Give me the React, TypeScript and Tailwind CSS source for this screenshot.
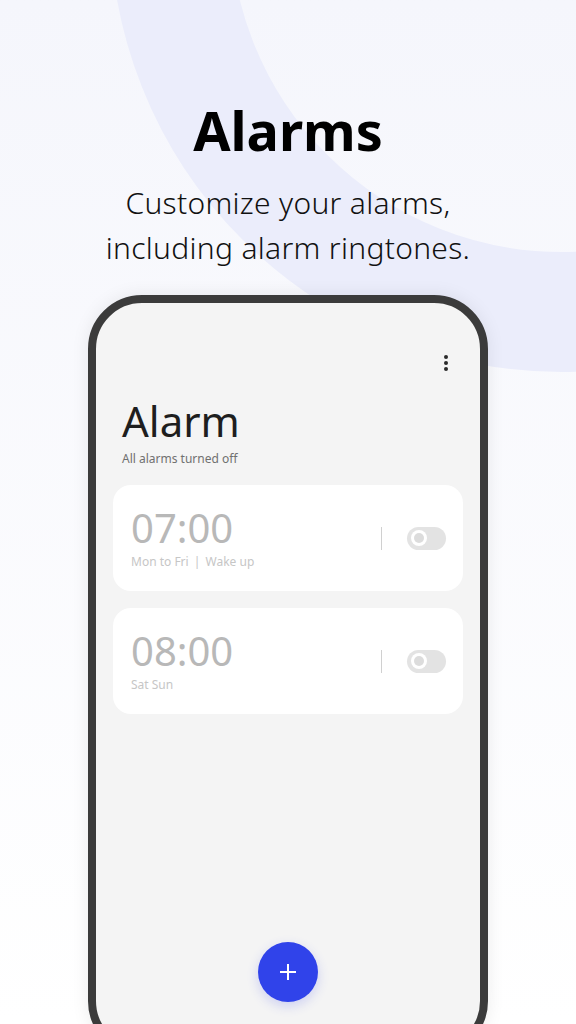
function Toggle() {
	return (
		<div className="flex h-[23px] w-[39px] items-center rounded-full bg-[#e3e3e3] pl-[4px]">
			<div className="flex h-[16px] w-[16px] items-center justify-center rounded-full bg-white">
				<div className="h-[10px] w-[10px] rounded-full bg-[#dcdcdc]" />
			</div>
		</div>
	);
}

function AlarmCard({ time, label }: { time: string; label: React.ReactNode }) {
	return (
		<div className="flex h-[106px] items-center rounded-[18px] bg-white pl-[18px] pr-[17px]">
			<div className="flex-1">
				<div className="text-[40px] leading-[44px] text-[#b8b8b8]">{time}</div>
				<div className="mt-[4px] text-[12px] leading-[16px] text-[#c6c6c6]">{label}</div>
			</div>
			<div className="mr-[25px] h-[23px] w-px bg-[#d0d0d0]" />
			<Toggle />
		</div>
	);
}

export default function App() {
	return (
		<div
			className="relative h-[1024px] w-full overflow-hidden bg-gradient-to-b from-[#f5f6fc] to-white"
			style={{ fontFamily: '"Noto Sans", "Open Sans", sans-serif' }}
		>
			<div className="pointer-events-none absolute left-[110px] top-[-532px] h-[904px] w-[904px] rounded-full border-[120px] border-[#ebedfb]" />

			<main className="relative flex flex-col items-center">
				<h1 className="mt-[94px] text-[54px] font-bold leading-[72px] text-black">Alarms</h1>
				<p className="mt-[14px] text-center text-[30px] font-light leading-[45px] tracking-[0.01em] text-[#111]">
					Customize your alarms,
					<br />
					including alarm ringtones.
				</p>

				<div className="relative mt-[25px] h-[760px] w-[400px] rounded-[54px] border-8 border-[#3b3b3b] bg-[#f4f4f4] px-[17px] shadow-[0_0_18px_rgba(0,0,0,0.08)]">
					<div className="flex justify-end pr-[15px] pt-[52px]">
						<div className="flex flex-col gap-[2px]">
							<span className="h-[4px] w-[4px] rounded-full bg-[#2a2a2a]" />
							<span className="h-[4px] w-[4px] rounded-full bg-[#2a2a2a]" />
							<span className="h-[4px] w-[4px] rounded-full bg-[#2a2a2a]" />
						</div>
					</div>

					<div className="pl-[9px]">
						<div className="mt-[24px] text-[42px] leading-[52px] text-[#1e1e1e]">Alarm</div>
						<div className="mt-[4px] text-[12px] leading-[16px] text-[#707070]">All alarms turned off</div>
					</div>

					<div className="mt-[18px] flex flex-col gap-[17px]">
						<AlarmCard
							time="07:00"
							label={
								<>
									Mon to Fri <span className="mx-[2px]">|</span> Wake up
								</>
							}
						/>
						<AlarmCard time="08:00" label="Sat Sun" />
					</div>

					<button className="absolute left-1/2 top-[639px] flex h-[60px] w-[60px] -translate-x-1/2 items-center justify-center rounded-full bg-[#3043ea] shadow-[0_4px_12px_rgba(48,67,234,0.2)]">
						<svg width="20" height="20" viewBox="0 0 20 20" fill="none" stroke="white" strokeWidth="2">
							<path d="M10 2v16M2 10h16" />
						</svg>
					</button>
				</div>
			</main>
		</div>
	);
}
